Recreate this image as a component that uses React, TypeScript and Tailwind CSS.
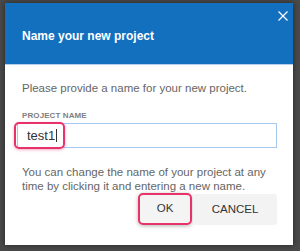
import { useState } from 'react';

export default function App() {
    const [name, setName] = useState('test1');

    return (
        <div className="w-[300px] h-[251px] bg-[#4a4a4a] pt-[3px] pl-[5px] overflow-hidden font-['Liberation_Sans',Arial,sans-serif]">
            <div className="w-[288px] h-[242px] bg-white flex flex-col shadow-[0_0_6px_rgba(0,0,0,0.5)]">
                <header className="relative h-[62px] bg-[#1270bf] border-b border-[#b3d1ee] pl-[17px] pt-[26px]">
                    <h1 className="text-[12px] leading-[14px] font-bold text-white">Name your new project</h1>
                    <button className="absolute top-[6px] right-[3px] w-[14px] h-[14px] flex items-center justify-center" aria-label="Close">
                        <svg width="10" height="10" viewBox="0 0 10 10" fill="none" stroke="white" strokeWidth="1.2">
                            <path d="M0.5 0.5L9.5 9.5M9.5 0.5L0.5 9.5" />
                        </svg>
                    </button>
                </header>

                <div className="pl-[17px] pr-[16px] pt-[16px] flex flex-col">
                    <p className="text-[11.5px] leading-[14px] text-[#666]">Please provide a name for your new project.</p>

                    <label className="mt-[16px] text-[8px] leading-[10px] font-bold text-[#808080] tracking-[0.1px]">PROJECT NAME</label>
                    <div className="relative mt-[2px] ml-[-5px] w-[260px]">
                        <input
                            value={name}
                            onChange={(e) => setName(e.target.value)}
                            className="w-full h-[25px] border border-[#a8c7f0] pl-[9px] text-[13px] text-[#333] outline-none bg-white"
                        />
                        <span className="absolute left-[39px] top-[6px] w-px h-[13px] bg-[#333]" />
                        <div className="absolute left-[-3px] top-[-1px] w-[51px] h-[27px] border-[2.5px] border-[#e8336a] rounded-[5px] pointer-events-none shadow-[0_1px_3px_rgba(232,51,106,0.4)]" />
                    </div>

                    <p className="mt-[17px] text-[11.5px] leading-[14px] text-[#666]">
                        You can change the name of your project at any time by clicking it and entering a new name.
                    </p>

                    <div className="mt-[1px] flex justify-end gap-[1px]">
                        <button className="w-[54px] h-[32px] -mt-[1px] bg-[#f4f4f4] border-[2.5px] border-[#e8336a] rounded-[5px] text-[11.5px] text-[#333] shadow-[0_1px_4px_rgba(0,0,0,0.3)]">
                            OK
                        </button>
                        <button className="w-[84px] h-[31px] bg-[#f3f3f3] rounded-[3px] text-[11.5px] text-[#333]">
                            CANCEL
                        </button>
                    </div>
                </div>
            </div>
        </div>
    );
}
